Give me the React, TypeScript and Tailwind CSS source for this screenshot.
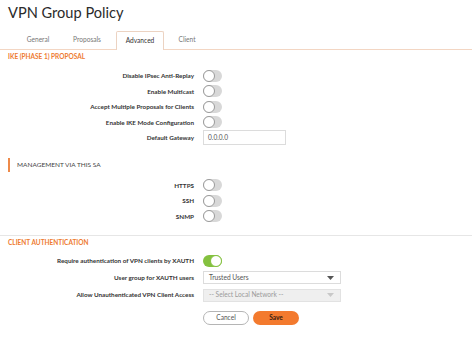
import React from "react";

const Toggle = ({ on = false }: { on?: boolean }) => (
  <div
    className={`relative w-[19px] h-[12px] rounded-full ${
      on ? "bg-[#84c13f]" : "bg-[#d8d8d8]"
    }`}
  >
    <div
      className={`absolute top-0 h-[12px] w-[12px] rounded-full bg-white border ${
        on ? "right-0 border-[#84c13f] border-[1.5px]" : "left-0 border-[#9a9a9a]"
      }`}
    />
  </div>
);

const Row = ({
  label,
  h,
  children,
}: {
  label: string;
  h: string;
  children: React.ReactNode;
}) => (
  <div className={`flex items-center ${h}`}>
    <div className="w-[195px] pr-[1px] text-right text-[6.3px] font-bold text-[#333]">
      {label}
    </div>
    <div className="ml-[8px] flex items-center">{children}</div>
  </div>
);

const Caret = ({ light = false }: { light?: boolean }) => (
  <svg width="7" height="4" viewBox="0 0 7 4">
    <path d="M0 0h7L3.5 4z" fill={light ? "#c8c8c8" : "#555"} />
  </svg>
);

export default function App() {
  return (
    <div className="w-[474px] h-[349px] overflow-hidden bg-white font-['Lato',sans-serif] text-[#333]">
      <h1 className="pl-[8px] pt-[3px] text-[14.6px] leading-[20px] text-[#2b2b2b]">
        VPN Group Policy
      </h1>

      <div className="mt-[9px] mr-[2px] flex h-[18px] items-end border-b border-[#f3d6c3] text-[6.6px] text-[#777]">
        <div className="ml-[14px] flex h-[18px] w-[48px] items-center justify-center">
          General
        </div>
        <div className="ml-[1px] flex h-[18px] w-[48px] items-center justify-center">
          Proposals
        </div>
        <div className="ml-[5px] -mb-px flex h-[19px] w-[48px] items-center justify-center rounded-t-[2px] border border-b-0 border-[#ecd3c2] bg-white text-[#333]">
          Advanced
        </div>
        <div className="flex h-[18px] w-[46px] items-center justify-center">Client</div>
      </div>

      <div className="mt-[2px] pl-[8px] text-[6.5px] leading-[10px] font-bold text-[#ee7b30]">
        IKE (PHASE 1) PROPOSAL
      </div>

      <div className="mt-[6px]">
        <Row label="Disable IPsec Anti-Replay" h="h-[15.5px]">
          <Toggle />
        </Row>
        <Row label="Enable Multicast" h="h-[15.5px]">
          <Toggle />
        </Row>
        <Row label="Accept Multiple Proposals for Clients" h="h-[15.5px]">
          <Toggle />
        </Row>
        <Row label="Enable IKE Mode Configuration" h="h-[15.5px]">
          <Toggle />
        </Row>
        <Row label="Default Gateway" h="h-[15.5px]">
          <div className="flex h-[15px] w-[83px] items-center border border-[#dcdcdc] bg-white pl-[4px] text-[6.6px] text-[#555]">
            0.0.0.0
          </div>
        </Row>
      </div>

      <div className="mt-[12px] ml-[8px] flex h-[14px] items-center border-l-2 border-[#ee8a4a] pl-[7px] text-[6.5px] text-[#444]">
        MANAGEMENT VIA THIS SA
      </div>

      <div className="mt-[6px]">
        <Row label="HTTPS" h="h-[15.5px]">
          <Toggle />
        </Row>
        <Row label="SSH" h="h-[15.5px]">
          <Toggle />
        </Row>
        <Row label="SNMP" h="h-[15.5px]">
          <Toggle />
        </Row>
      </div>

      <div className="mt-[11px] mr-[2px] border-t border-[#e6e6e6]" />

      <div className="mt-[2px] pl-[8px] text-[6.5px] leading-[10px] font-bold text-[#ee7b30]">
        CLIENT AUTHENTICATION
      </div>

      <div className="mt-[5px]">
        <Row label="Require authentication of VPN clients by XAUTH" h="h-[16px]">
          <Toggle on />
        </Row>
        <Row label="User group for XAUTH users" h="h-[17px]">
          <div className="flex h-[13px] w-[138px] items-center justify-between border border-[#dcdcdc] bg-white pl-[5px] pr-[6px] text-[6.6px] text-[#555]">
            <span>Trusted Users</span>
            <Caret />
          </div>
        </Row>
        <Row label="Allow Unauthenticated VPN Client Access" h="h-[18px]">
          <div className="flex h-[13px] w-[138px] items-center justify-between border border-[#e2e2e2] bg-[#efefef] pl-[5px] pr-[6px] text-[6.6px] text-[#9a9a9a]">
            <span>-- Select Local Network --</span>
            <Caret light />
          </div>
        </Row>
      </div>

      <div className="mt-[7px] ml-[203px] flex gap-[4px]">
        <button className="flex h-[14px] w-[46px] items-center justify-center rounded-full border border-[#b5b5b5] bg-white text-[6.6px] text-[#555]">
          Cancel
        </button>
        <button className="flex h-[14px] w-[46px] items-center justify-center rounded-full bg-[#f37a2e] text-[6.6px] font-bold text-[#3a2010]">
          Save
        </button>
      </div>
    </div>
  );
}
